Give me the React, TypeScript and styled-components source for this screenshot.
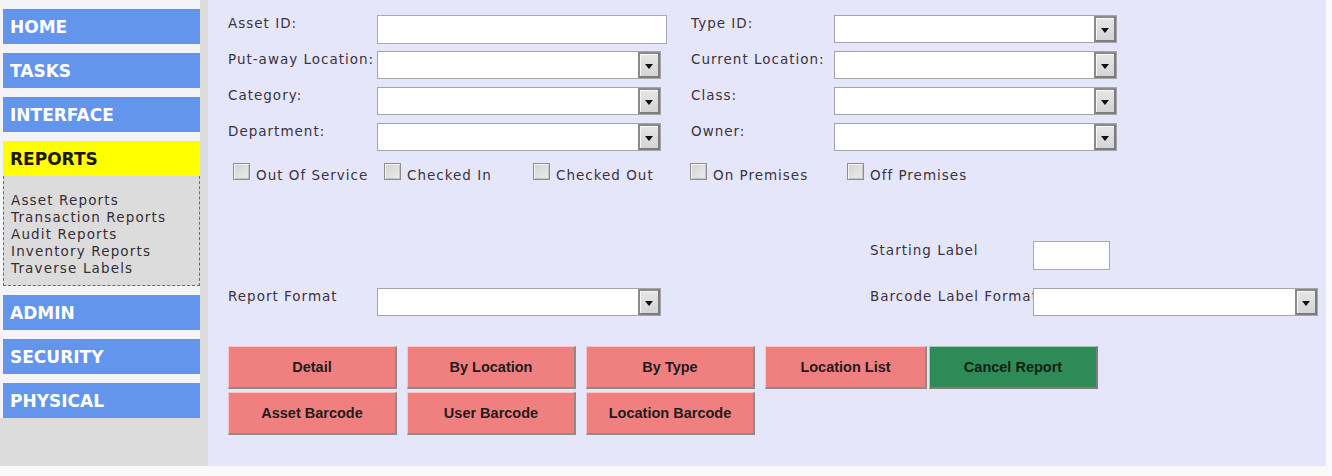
import React from "react";
import styled, { createGlobalStyle } from "styled-components";

const GlobalStyle = createGlobalStyle`
  html, body {
    margin: 0;
    padding: 0;
    background: #f9f9fc;
  }
  * {
    box-sizing: border-box;
  }
`;

const navItems = ["HOME", "TASKS", "INTERFACE"];
const lowerNav = ["ADMIN", "SECURITY", "PHYSICAL"];
const reportLinks = [
  "Asset Reports",
  "Transaction Reports",
  "Audit Reports",
  "Inventory Reports",
  "Traverse Labels",
];

const statusChecks = [
  { label: "Out Of Service", width: 151 },
  { label: "Checked In", width: 149 },
  { label: "Checked Out", width: 157 },
  { label: "On Premises", width: 157 },
  { label: "Off Premises", width: 150 },
];

const App: React.FC = () => {
  return (
    <>
      <GlobalStyle />
      <Page>
        <Sidebar>
          <NavList>
            {navItems.map((n) => (
              <NavItem key={n}>{n}</NavItem>
            ))}
            <ReportsGroup>
              <NavItem $active>REPORTS</NavItem>
              <SubMenu>
                {reportLinks.map((r) => (
                  <SubLink key={r}>{r}</SubLink>
                ))}
              </SubMenu>
            </ReportsGroup>
            {lowerNav.map((n) => (
              <NavItem key={n}>{n}</NavItem>
            ))}
          </NavList>
        </Sidebar>

        <Main>
          <FormRow>
            <Label $w={149}>Asset ID:</Label>
            <TextBox $w={290} $h={29} />
            <Spacer $w={24} />
            <Label $w={143}>Type ID:</Label>
            <Select $w={283} />
          </FormRow>
          <FormRow>
            <Label $w={149}>Put-away Location:</Label>
            <Select $w={284} />
            <Spacer $w={30} />
            <Label $w={143}>Current Location:</Label>
            <Select $w={283} />
          </FormRow>
          <FormRow>
            <Label $w={149}>Category:</Label>
            <Select $w={284} />
            <Spacer $w={30} />
            <Label $w={143}>Class:</Label>
            <Select $w={283} />
          </FormRow>
          <FormRow>
            <Label $w={149}>Department:</Label>
            <Select $w={284} />
            <Spacer $w={30} />
            <Label $w={143}>Owner:</Label>
            <Select $w={283} />
          </FormRow>

          <CheckRow>
            {statusChecks.map((c) => (
              <CheckItem key={c.label} $w={c.width}>
                <CheckBox />
                <CheckText>{c.label}</CheckText>
              </CheckItem>
            ))}
          </CheckRow>

          <StartRow>
            <Spacer $w={642} />
            <Label $w={163}>Starting Label</Label>
            <TextBox $w={77} $h={29} />
          </StartRow>

          <FormatRow>
            <Label $w={149}>Report Format</Label>
            <Select $w={284} />
            <Spacer $w={209} />
            <Label $w={163}>Barcode Label Format</Label>
            <Select $w={285} />
          </FormatRow>

          <ButtonArea>
            <ButtonRow>
              <ActionButton>Detail</ActionButton>
              <ActionButton>By Location</ActionButton>
              <ActionButton>By Type</ActionButton>
              <ButtonPair>
                <ActionButton $w={162}>Location List</ActionButton>
                <ActionButton $cancel>Cancel Report</ActionButton>
              </ButtonPair>
            </ButtonRow>
            <ButtonRow>
              <ActionButton>Asset Barcode</ActionButton>
              <ActionButton>User Barcode</ActionButton>
              <ActionButton>Location Barcode</ActionButton>
            </ButtonRow>
          </ButtonArea>
        </Main>
      </Page>
    </>
  );
};

export default App;

const Page = styled.div`
  display: flex;
  width: 1326px;
  height: 466px;
`;

const Sidebar = styled.aside`
  width: 208px;
  flex-shrink: 0;
  background: #dcdcdc;
`;

const NavList = styled.nav`
  width: 200px;
  padding-top: 9px;
  background: #f4f4f8;
  display: flex;
  flex-direction: column;
  gap: 9px;
`;

const ReportsGroup = styled.div`
  display: flex;
  flex-direction: column;
`;

const NavItem = styled.div<{ $active?: boolean }>`
  margin-left: 3px;
  height: 35px;
  padding-left: 7px;
  display: flex;
  align-items: center;
  font-family: "DejaVu Sans", Verdana, sans-serif;
  font-weight: bold;
  font-size: 17px;
  background: ${(p) => (p.$active ? "#ffff00" : "#6495ed")};
  color: ${(p) => (p.$active ? "#1c1800" : "#ffffff")};
`;

const SubMenu = styled.div`
  margin-left: 3px;
  height: 110px;
  padding: 16px 0 0 7px;
  background: #dcdcdc;
  border: 1px dashed #6a6a6a;
  border-top: none;
`;

const SubLink = styled.div`
  font-family: "DejaVu Sans", Verdana, sans-serif;
  font-size: 13.5px;
  line-height: 17px;
  letter-spacing: 1.15px;
  color: #352c3a;
`;

const Main = styled.main`
  flex: 1;
  background: #e6e6fa;
  padding: 15px 0 0 20px;
`;

const FormRow = styled.div`
  display: flex;
  align-items: flex-start;
  height: 28px;
  margin-bottom: 8px;
`;

const Spacer = styled.div<{ $w: number }>`
  width: ${(p) => p.$w}px;
  flex-shrink: 0;
`;

const Label = styled.div<{ $w: number }>`
  width: ${(p) => p.$w}px;
  flex-shrink: 0;
  overflow: hidden;
  white-space: nowrap;
  font-family: "DejaVu Sans", Verdana, sans-serif;
  font-size: 13.5px;
  line-height: 17px;
  letter-spacing: 1px;
  color: #3a3340;
`;

const TextBox = styled.div<{ $w: number; $h: number }>`
  width: ${(p) => p.$w}px;
  height: ${(p) => p.$h}px;
  flex-shrink: 0;
  background: #ffffff;
  border: 1px solid #a9a9b0;
`;

const SelectFrame = styled.div<{ $w: number }>`
  width: ${(p) => p.$w}px;
  height: 28px;
  flex-shrink: 0;
  display: flex;
  justify-content: flex-end;
  background: #ffffff;
  border: 1px solid #a5a5ab;
`;

const DropButton = styled.div`
  width: 22px;
  height: 100%;
  display: flex;
  align-items: center;
  justify-content: center;
  background: linear-gradient(#e6e6e6, #d4d4d4);
  border: 2px solid #7c7c7c;
  border-top-color: #8a8a8a;
  border-left-color: #8a8a8a;
  box-shadow: inset 1px 1px 0 #f6f6f6;

  &::after {
    content: "";
    border-left: 4px solid transparent;
    border-right: 4px solid transparent;
    border-top: 5px solid #111;
    margin-top: 2px;
  }
`;

const Select: React.FC<{ $w: number }> = ({ $w }) => (
  <SelectFrame $w={$w}>
    <DropButton />
  </SelectFrame>
);

const CheckRow = styled.div`
  display: flex;
  margin-top: 12px;
  margin-left: 5px;
`;

const CheckItem = styled.div<{ $w: number }>`
  width: ${(p) => p.$w}px;
  flex-shrink: 0;
  display: flex;
  align-items: flex-start;
`;

const CheckBox = styled.span`
  width: 17px;
  height: 17px;
  flex-shrink: 0;
  border: 1px solid #8e8e8e;
  background: linear-gradient(135deg, #d2d2d2, #ededed);
  box-shadow: inset 1px 1px 0 #f4f4f4, inset -1px -1px 0 #c4c4c4;
`;

const CheckText = styled.span`
  margin-left: 6px;
  padding-top: 4px;
  font-family: "DejaVu Sans", Verdana, sans-serif;
  font-size: 13.5px;
  line-height: 17px;
  letter-spacing: 1px;
  color: #3a3340;
  white-space: nowrap;
`;

const StartRow = styled.div`
  display: flex;
  align-items: flex-start;
  margin-top: 57px;
  & > ${Label} {
    padding-top: 1px;
  }
`;

const FormatRow = styled.div`
  display: flex;
  align-items: flex-start;
  margin-top: 18px;
`;

const ButtonArea = styled.div`
  margin-top: 30px;
  display: flex;
  flex-direction: column;
  gap: 3px;
`;

const ButtonRow = styled.div`
  display: flex;
  gap: 10px;
`;

const ButtonPair = styled.div`
  display: flex;
  gap: 2px;
`;

const ActionButton = styled.button<{ $w?: number; $cancel?: boolean }>`
  width: ${(p) => p.$w ?? 169}px;
  height: 43px;
  padding: 0;
  font-family: "Liberation Sans", Arial, sans-serif;
  font-weight: bold;
  font-size: 14.5px;
  color: ${(p) => (p.$cancel ? "#0e1f14" : "#221c1c")};
  background: ${(p) => (p.$cancel ? "#2e8b57" : "#f08080")};
  border: 1px solid;
  border-color: ${(p) =>
    p.$cancel ? "#9ccfb0 #7d7d7d #7d7d7d #9ccfb0" : "#f9c4c4 #8c8c8c #8c8c8c #f9c4c4"};
  border-bottom-width: 2px;
  border-right-width: 2px;
  cursor: pointer;
`;
